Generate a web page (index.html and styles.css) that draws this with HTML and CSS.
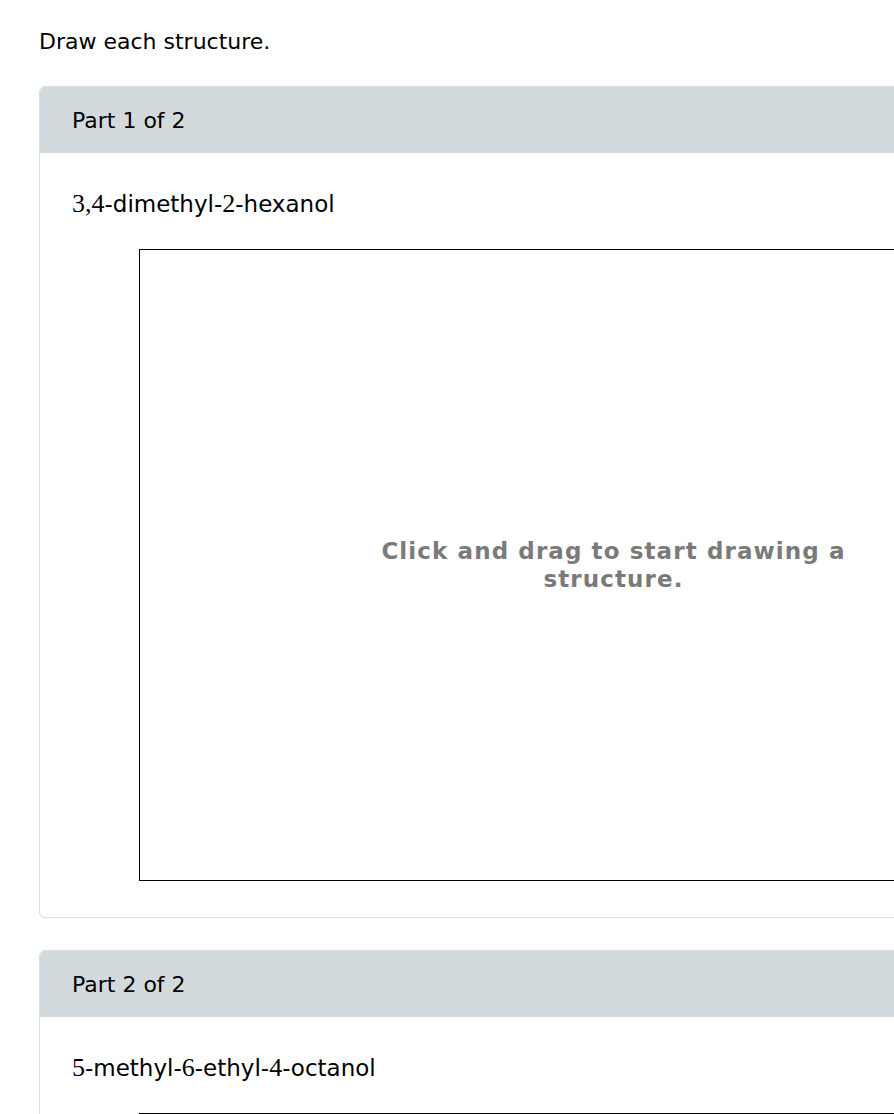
FILE: index.html
```html
<!DOCTYPE html>
<html>
<head>
<meta charset="utf-8">
<link rel="stylesheet" href="styles.css">
</head>
<body>
<div class="page">
  <p class="intro">Draw each structure.</p>

  <section class="card">
    <div class="card-head">Part 1 of 2</div>
    <div class="card-body">
      <p class="name"><span class="num">3,4</span>-dimethyl-<span class="num">2</span>-hexanol</p>
      <div class="canvas">
        <p class="hint">Click and drag to start drawing a<br>structure.</p>
      </div>
    </div>
  </section>

  <section class="card">
    <div class="card-head">Part 2 of 2</div>
    <div class="card-body">
      <p class="name"><span class="num">5</span>-methyl-<span class="num">6</span>-ethyl-<span class="num">4</span>-octanol</p>
      <div class="canvas">
        <p class="hint">Click and drag to start drawing a<br>structure.</p>
      </div>
    </div>
  </section>
</div>
</body>
</html>
```

FILE: styles.css
```css
html, body {
  margin: 0;
  padding: 0;
  overflow: hidden;
  background: #ffffff;
}

.page {
  padding: 29px 0 0 39px;
  font-family: "DejaVu Sans", Verdana, sans-serif;
  font-size: 22px;
  line-height: 26px;
  color: #000000;
  width: 1300px;
}

.intro {
  margin: 0 0 31px 0;
}

.card {
  width: 1200px;
  border: 1px solid #d9e0e2;
  border-radius: 6px;
  margin-bottom: 32px;
  overflow: hidden;
}

.card-head {
  height: 67px;
  margin: -1px -1px 0 -1px;
  background: #d2dadd;
  display: flex;
  align-items: center;
  padding: 3px 33px 0 33px;
  box-sizing: border-box;
}

.card-body {
  padding: 38px 0 36px 32px;
}

.name {
  margin: 0 0 32px 0;
  height: 26px;
  font-size: 23px;
}

.num {
  font-family: "Liberation Serif", "Times New Roman", serif;
  font-size: 26px;
  line-height: 20px;
}

.canvas {
  margin-left: 67px;
  width: 947px;
  height: 630px;
  border: 1px solid #000000;
  display: flex;
  align-items: center;
  justify-content: center;
}

.hint {
  margin: 0;
  text-align: center;
  font-weight: bold;
  font-size: 23px;
  letter-spacing: 1.1px;
  line-height: 28px;
  color: #7a7a7a;
}
```
